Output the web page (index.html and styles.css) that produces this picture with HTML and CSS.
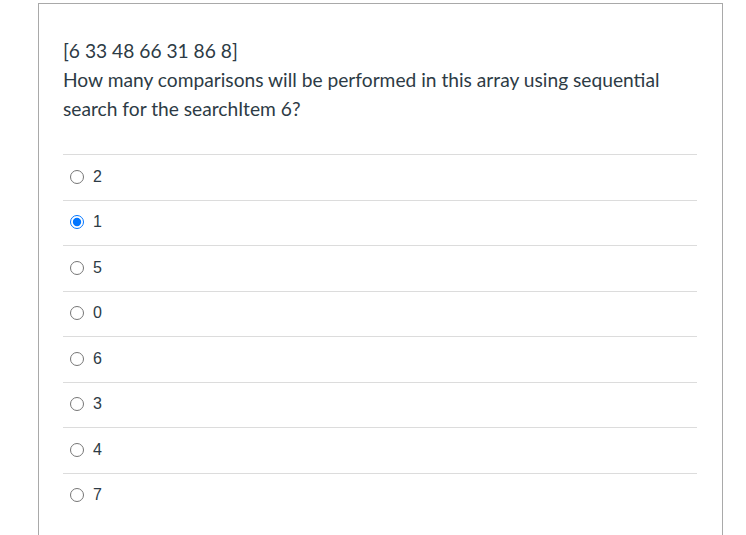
FILE: index.html
```html
<!DOCTYPE html>
<html>
<head>
<meta charset="utf-8">
<link rel="stylesheet" href="styles.css">
</head>
<body>
<div class="question">
  <div class="text">
    <p>[6 33 48 66 31 86 8]</p>
    <p>How many comparisons will be performed in this array using sequential search for the searchItem 6?</p>
  </div>
  <div class="answers">
    <label class="answer"><input type="radio" name="a"><span>2</span></label>
    <label class="answer"><input type="radio" name="a" checked><span>1</span></label>
    <label class="answer"><input type="radio" name="a"><span>5</span></label>
    <label class="answer"><input type="radio" name="a"><span>0</span></label>
    <label class="answer"><input type="radio" name="a"><span>6</span></label>
    <label class="answer"><input type="radio" name="a"><span>3</span></label>
    <label class="answer"><input type="radio" name="a"><span>4</span></label>
    <label class="answer"><input type="radio" name="a"><span>7</span></label>
  </div>
</div>
</body>
</html>
```
FILE: styles.css
```css
html, body {
  margin: 0;
  padding: 0;
  background: #fff;
}
body {
  padding-top: 3px;
  overflow: hidden;
  height: 535px;
  box-sizing: border-box;
}
.question {
  margin-left: 38px;
  width: 685px;
  height: 532px;
  box-sizing: border-box;
  border: 1px solid #a9a9a9;
  border-bottom: none;
  padding: 32px 25px 0 24px;
  color: #2d3b45;
  overflow: hidden;
}
.text {
  font-family: Lato, "Noto Sans", sans-serif;
  font-size: 19.2px;
  line-height: 29px;
}
.text p {
  margin: 0;
}
.answers {
  margin-top: 31px;
}
.answer {
  display: flex;
  align-items: center;
  height: 45.5px;
  box-sizing: border-box;
  border-top: 1px solid #dcdcdc;
  font-family: "Liberation Sans", Arial, sans-serif;
  font-size: 16px;
  padding-left: 7px;
  padding-bottom: 1px;
}
.answer input {
  margin: 0 9px 0 0;
  width: 14px;
  height: 14px;
}
```
